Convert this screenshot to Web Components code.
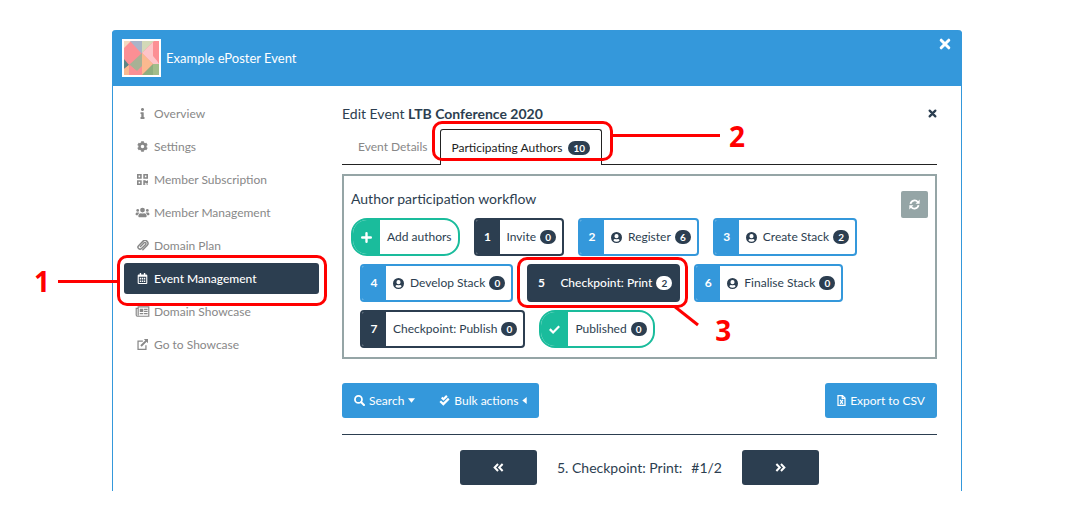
<!DOCTYPE html>
<html lang="en">
<head>
<meta charset="utf-8">
<title>Example ePoster Event</title>
<style>
  :root {
    --blue: #3498db;
    --dark: #2c3e50;
    --green: #1abc9c;
    --grey: #95a5a6;
    --muted: #888;
  }
  body {
    margin: 0;
    padding: 30px 114px 27px 112px;
    background: #fff;
    color: var(--dark);
    font: 12px/18px Lato, "Liberation Sans", sans-serif;
  }
</style>
</head>
<body>

<event-modal heading="Example ePoster Event">
  <side-nav slot="nav">
    <nav-item icon="info">Overview</nav-item>
    <nav-item icon="cog">Settings</nav-item>
    <nav-item icon="qrcode">Member Subscription</nav-item>
    <nav-item icon="users">Member Management</nav-item>
    <nav-item icon="clip">Domain Plan</nav-item>
    <nav-item icon="calendar" active>Event Management<call-out slot="note" side="left" label="1"></call-out></nav-item>
    <nav-item icon="news">Domain Showcase</nav-item>
    <nav-item icon="external">Go to Showcase</nav-item>
  </side-nav>

  <event-title name="LTB Conference 2020">Edit Event</event-title>

  <tab-bar>
    <tab-item>Event Details</tab-item>
    <tab-item active count="10">Participating Authors<call-out slot="note" side="right" label="2"></call-out></tab-item>
  </tab-bar>

  <work-flow heading="Author participation workflow">
    <flow-step class="first" kind="round" icon="plus">Add authors</flow-step>
    <flow-step kind="dark" number="1" count="0">Invite</flow-step>
    <flow-step number="2" count="6" user>Register</flow-step>
    <flow-step number="3" count="2" user>Create Stack</flow-step>
    <flow-step number="4" count="0" user>Develop Stack</flow-step>
    <flow-step kind="dark" number="5" count="2" active>Checkpoint: Print<call-out slot="note" side="below" label="3"></call-out></flow-step>
    <flow-step number="6" count="0" user>Finalise Stack</flow-step>
    <flow-step kind="dark" number="7" count="0">Checkpoint: Publish</flow-step>
    <flow-step kind="round" icon="check" count="0">Published</flow-step>
  </work-flow>

  <action-bar></action-bar>
  <step-pager position="#1/2">5. Checkpoint: Print:</step-pager>
</event-modal>

<script>
  // viewBox + content for every icon of the page
  const ICONS = {
    info: ['0 0 192 512', '<path d="M20 424h20V280H20c-11 0-20-9-20-20v-48c0-11 9-20 20-20h112c11 0 20 9 20 20v212h20c11 0 20 9 20 20v48c0 11-9 20-20 20H20c-11 0-20-9-20-20v-48c0-11 9-20 20-20zM96 0C56 0 24 32 24 72s32 72 72 72 72-32 72-72S136 0 96 0z"/>'],
    cog: ['0 0 512 512', '<path d="M487.400 315.700l-42.600-24.600c4.300-23.200 4.300-47 0-70.200l42.600-24.600c4.900-2.800 7.100-8.600 5.500-14-11.100-35.600-30-67.800-54.700-94.600-3.800-4.100-10-5.100-14.800-2.300L380.800 110c-17.900-15.400-38.500-27.300-60.800-35.100V25.800c0-5.600-3.900-10.500-9.400-11.700-36.700-8.200-74.300-7.800-109.200 0-5.500 1.200-9.400 6.100-9.400 11.700V75c-22.200 7.900-42.800 19.800-60.800 35.100L88.700 85.500c-4.900-2.800-11-1.900-14.800 2.300-24.700 26.700-43.600 58.900-54.700 94.600-1.700 5.400.6 11.200 5.500 14L67.300 221c-4.300 23.200-4.300 47 0 70.200l-42.600 24.600c-4.900 2.800-7.100 8.600-5.500 14 11.100 35.600 30 67.800 54.700 94.600 3.800 4.100 10 5.100 14.800 2.300l42.600-24.600c17.900 15.400 38.500 27.300 60.800 35.100v49.200c0 5.600 3.900 10.500 9.400 11.700 36.700 8.200 74.300 7.800 109.200 0 5.500-1.200 9.400-6.100 9.400-11.700v-49.200c22.200-7.900 42.800-19.800 60.800-35.100l42.600 24.600c4.900 2.800 11 1.900 14.800-2.300 24.700-26.700 43.600-58.900 54.700-94.600 1.500-5.500-.7-11.300-5.600-14.100zM256 336c-44.100 0-80-35.900-80-80s35.900-80 80-80 80 35.900 80 80-35.900 80-80 80z"/>'],
    qrcode: ['0 32 448 448', '<path d="M0 224h192V32H0v192zM64 96h64v64H64V96zm192-64v192h192V32H256zm128 128h-64V96h64v64zM0 480h192V288H0v192zm64-128h64v64H64v-64zm352-64h32v128h-96v-32h-32v96h-64V288h96v32h64v-32zm0 160h32v32h-32v-32zm-64 0h32v32h-32v-32z"/>'],
    users: ['0 0 640 512', '<circle cx="96" cy="160" r="64"/><circle cx="544" cy="160" r="64"/><circle cx="320" cy="144" r="112"/><path d="M576 256h-64c-18 0-34 7-45 19 40 22 69 62 75 109h66c18 0 32-14 32-32v-32c0-35-29-64-64-64zM397 288h-9c-21 10-44 16-68 16s-48-6-69-16h-8c-63 0-115 52-115 115v29c0 27 21 48 48 48h288c27 0 48-21 48-48v-29c0-63-52-115-115-115zM173 275c-12-12-27-19-45-19H64c-35 0-64 29-64 64v32c0 18 14 32 32 32h66c6-47 35-87 75-109z"/>'],
    clip: ['0 0 16 16', '<path d="M5 9.500l5.300-5.400a1.600 1.600 0 0 1 2.300 2.300l-6 6.100a3 3 0 0 1-4.300-4.300l6.200-6.200a4.300 4.300 0 0 1 6.100 6.100L8.500 14.200" fill="none" stroke="currentColor" stroke-width="2.100" stroke-linecap="round"/>'],
    calendar: ['0 0 14 16', '<path fill-rule="evenodd" d="M3 0h2v2h4V0h2v2h1.500A1.500 1.500 0 0 1 14 3.500V14.500A1.500 1.500 0 0 1 12.500 16h-11A1.500 1.500 0 0 1 0 14.500v-11A1.500 1.500 0 0 1 1.500 2H3zM1.600 5.500v8.900h10.800V5.500z"/><path d="M3 7h2v2.500H3zM6 7h2v2.500H6zM9 7h2v2.500H9zM3 10.800h2V13H3zM6 10.800h2V13H6zM9 10.800h2V13H9z"/>'],
    news: ['0 0 18 14', '<path d="M3.500 1h13.500v12H2.500A1.500 1.500 0 0 1 1 11.500V3h2.500zM3.500 3v9" fill="none" stroke="currentColor" stroke-width="1.500"/><path d="M5.500 3.500H10v4H5.500zM11 3.500h4.500V5H11zM11 6.200h4.500v1.500H11zM5.500 9h4.500v1.500H5.500zM11 9h4.500v1.500H11z"/>'],
    external: ['0 0 16 16', '<path d="M8.500 3H1.500v12h11.500V9" fill="none" stroke="currentColor" stroke-width="1.800"/><path d="M10 0h6v6l-2-2-7.200 7.200-2-2L12 2z"/>'],
    user: ['0 0 16 16', '<path fill-rule="evenodd" d="M8 0a8 8 0 1 1 0 16A8 8 0 0 1 8 0zM8 3a3 3 0 1 0 0 6 3 3 0 0 0 0-6zM3.400 12a5.800 5.800 0 0 0 9.200 0A3 3 0 0 0 10 10.200c-1.300.5-2.700.5-4 0A3 3 0 0 0 3.400 12z"/>'],
    plus: ['0 0 12 12', '<path d="M6 1.300v9.400M1.300 6h9.400" stroke="currentColor" stroke-width="2.600" stroke-linecap="round"/>'],
    check: ['0 0 14 12', '<path d="M2 6.500L5.200 9.700 12 2.800" fill="none" stroke="currentColor" stroke-width="2.800" stroke-linecap="square"/>'],
    times: ['0 0 12 12', '<path d="M2.200 2.200l7.600 7.600M9.800 2.200L2.200 9.800" stroke="currentColor" stroke-width="3" stroke-linecap="round"/>'],
    refresh: ['0 0 16 16', '<path d="M2.200 7A6 6 0 0 1 12.800 4.300M13.800 9A6 6 0 0 1 3.200 11.700" fill="none" stroke="currentColor" stroke-width="2.600"/><path d="M15.500.8v6H9.500zM.5 15.200v-6h6z"/>'],
    search: ['0 0 16 16', '<circle cx="6.500" cy="6.500" r="5.100" fill="none" stroke="currentColor" stroke-width="2.600"/><path d="M10.500 10.500l4 4" stroke="currentColor" stroke-width="3" stroke-linecap="round"/>'],
    checks: ['0 0 16 16', '<path d="M4 3.700L6.500 6.200 11.500 1.300M1.800 9L6.300 13.300 14.200 5.300" fill="none" stroke="currentColor" stroke-width="3.200"/>'],
    excel: ['0 0 12 16', '<path d="M.9.900h6.600l3.600 3.600v10.600H.9zM7 1v4h4" fill="none" stroke="currentColor" stroke-width="1.800"/><path d="M4 7l4 6M8 7l-4 6" stroke="currentColor" stroke-width="1.700"/>'],
    down: ['0 0 8 5', '<path d="M0 0h8L4 5z"/>'],
    left: ['0 0 5 8', '<path d="M5 0v8L0 4z"/>'],
    prev: ['0 0 12 10', '<path d="M5.500 1.200L1.800 5l3.700 3.800M10.500 1.200L6.800 5l3.700 3.800" fill="none" stroke="currentColor" stroke-width="2.200"/>'],
    next: ['0 0 12 10', '<path d="M1.500 1.200L5.200 5 1.500 8.800M6.500 1.200L10.200 5 6.500 8.800" fill="none" stroke="currentColor" stroke-width="2.200"/>']
  };

  class UiIcon extends HTMLElement {
    connectedCallback() {
      const [box, content] = ICONS[this.getAttribute('name')];
      this.attachShadow({ mode: 'open' }).innerHTML = `
        <style>
          :host { display: inline-flex; flex: none; width: 11px; height: 11px; }
          svg { width: 100%; height: 100%; fill: currentColor; }
        </style>
        <svg viewBox="${box}" aria-hidden="true">${content}</svg>
      `;
    }
  }

  class CountBadge extends HTMLElement {
    connectedCallback() {
      this.attachShadow({ mode: 'open' }).innerHTML = `
        <style>
          :host {
            display: inline-block; box-sizing: border-box; min-width: 16px; padding: 0 5px;
            border-radius: 8px; background: var(--badge-bg, var(--dark)); color: var(--badge-fg, #fff);
            font-size: 10px; font-weight: 700; line-height: 14px; text-align: center;
          }
        </style>
        <slot></slot>
      `;
    }
  }

  // Red frame with a numbered leader line, laid over its parent
  const LEADERS = {
    left: '<svg width="62" height="3"><path d="M0 1.500h62"/></svg>',
    right: '<svg width="110" height="3"><path d="M0 1.500h110"/></svg>',
    below: '<svg width="27" height="22"><path d="M1 1l24 19"/></svg>'
  };

  class CallOut extends HTMLElement {
    connectedCallback() {
      this.attachShadow({ mode: 'open' }).innerHTML = `
        <style>
          :host {
            position: absolute; z-index: 2; inset: -8px -8px -12px -7px;
            border: 3px solid #f00; border-radius: 10px; pointer-events: none;
          }
          :host([side="right"]) { inset: -8px -11px 4px -8px; }
          :host([side="below"]) { inset: -7px -8px -6px -10px; }
          svg { position: absolute; stroke: #f00; stroke-width: 3; fill: none; }
          b {
            position: absolute; color: #f00;
            font: 700 28px/28px "Open Sans", sans-serif;
          }
          :host([side="left"]) svg { right: 100%; top: 22px; }
          :host([side="left"]) b { right: calc(100% + 70px); top: 9px; }
          :host([side="right"]) svg { left: 100%; top: 10px; }
          :host([side="right"]) b { left: calc(100% + 119px); top: -2px; }
          :host([side="below"]) svg { right: -15px; top: 100%; }
          :host([side="below"]) b { right: -46px; top: calc(100% + 11px); }
        </style>
        ${LEADERS[this.getAttribute('side')]}
        <b>${this.getAttribute('label')}</b>
      `;
    }
  }

  class EventModal extends HTMLElement {
    connectedCallback() {
      this.attachShadow({ mode: 'open' }).innerHTML = `
        <style>
          :host {
            display: block; border: solid var(--blue); border-width: 0 1px;
            border-radius: 4px 4px 0 0;
          }
          header {
            display: flex; align-items: center; gap: 5px; height: 56px; margin: 0 -1px;
            padding: 0 11px 0 10px; box-sizing: border-box;
            border-radius: 4px 4px 0 0; background: var(--blue); color: #fff;
          }
          .logo { border: 2px solid #fff; box-sizing: border-box; width: 39px; height: 38px; }
          h1 { flex: 1; margin: 0; font-size: 13px; line-height: 20px; font-weight: 400; }
          button {
            display: flex; align-self: flex-start; margin: 0; padding: 8px 0;
            border: 0; background: none; color: inherit;
          }
          button ui-icon { width: 12px; height: 12px; }
          .body { display: grid; grid-template-columns: 195px minmax(0, 1fr); gap: 23px; padding: 12px 24px 6px 11px; }
        </style>
        <header>
          <svg class="logo" viewBox="0 0 35 34" preserveAspectRatio="none" aria-hidden="true">
            <path fill="#fc8f94" d="M0 0h35v34H0z"/>
            <path fill="#f3d9c0" d="M0 0h7L0 7z"/>
            <path fill="#a9b4c8" d="M6 0h12v13z"/>
            <path fill="#d3d9b8" d="M18 0h12L18 12z"/>
            <path fill="#fdc4c8" d="M18 12L29 1v11l6 11h-6z"/>
            <path fill="#fc8f94" d="M29 1h6v21l-6-7z"/>
            <path fill="#a8b195" d="M18 12v13l-5 5-8-6z"/>
            <path fill="#fbb98f" d="M18 12l11 11-11 11z"/>
            <path fill="#5e8686" d="M0 18l5 6-5 4z"/>
            <path fill="#fbb98f" d="M0 28l5-4v10H0z"/>
            <path fill="#fc8f94" d="M6 24l11 10H6z"/>
            <path fill="#8fae7f" d="M18 34l11-11v11z"/>
            <path fill="#a3bd8a" d="M29 23h6v11h-6z"/>
          </svg>
          <h1>${this.getAttribute('heading')}</h1>
          <button type="button" aria-label="Close"><ui-icon name="times"></ui-icon></button>
        </header>
        <div class="body">
          <slot name="nav"></slot>
          <main><slot></slot></main>
        </div>
      `;
    }
  }

  class SideNav extends HTMLElement {
    connectedCallback() {
      this.attachShadow({ mode: 'open' }).innerHTML = `
        <style>
          :host { display: block; }
          nav { display: flex; flex-direction: column; gap: 2px; }
        </style>
        <nav><slot></slot></nav>
      `;
    }
  }

  class NavItem extends HTMLElement {
    connectedCallback() {
      this.attachShadow({ mode: 'open' }).innerHTML = `
        <style>
          :host { display: block; position: relative; color: var(--muted); }
          :host([active]) { color: #fff; font-weight: 500; }
          a {
            display: flex; align-items: center; gap: 4px; height: 31px; padding-left: 11px;
            border-radius: 3px; color: inherit; text-decoration: none;
          }
          :host([active]) a { background: var(--dark); }
          ui-icon { width: 15px; }
        </style>
        <a href="#"><ui-icon name="${this.getAttribute('icon')}"></ui-icon><span><slot></slot></span></a>
        <slot name="note"></slot>
      `;
    }
  }

  class EventTitle extends HTMLElement {
    connectedCallback() {
      this.attachShadow({ mode: 'open' }).innerHTML = `
        <style>
          :host { display: flex; align-items: center; justify-content: space-between; height: 31px; }
          h2 { margin: 0; font-size: 14px; line-height: 20px; font-weight: 400; }
          button { display: flex; margin: 0; padding: 0; border: 0; background: none; color: var(--dark); }
          ui-icon { width: 9px; height: 9px; }
        </style>
        <h2><slot></slot> <b>${this.getAttribute('name')}</b></h2>
        <button type="button" aria-label="Close event"><ui-icon name="times"></ui-icon></button>
      `;
    }
  }

  class TabBar extends HTMLElement {
    connectedCallback() {
      this.attachShadow({ mode: 'open' }).innerHTML = `
        <style>
          :host { display: flex; border-bottom: 1px solid #222; }
        </style>
        <slot></slot>
      `;
    }
  }

  class TabItem extends HTMLElement {
    connectedCallback() {
      const count = this.getAttribute('count');
      this.attachShadow({ mode: 'open' }).innerHTML = `
        <style>
          :host { display: block; position: relative; color: var(--muted); }
          button {
            display: flex; align-items: center; gap: 6px; height: 35px; margin: 0; padding: 0 12px 0 16px;
            border: 0; background: none; color: inherit; font: inherit;
          }
          :host([active]) { margin-bottom: -1px; color: #222; }
          :host([active]) button {
            height: 36px; padding: 0 11px; background: #fff;
            border: 1px solid #222; border-bottom: 0; border-radius: 3px 3px 0 0;
          }
        </style>
        <button type="button"><span><slot></slot></span>${count ? `<count-badge>${count}</count-badge>` : ''}</button>
        <slot name="note"></slot>
      `;
    }
  }

  class WorkFlow extends HTMLElement {
    connectedCallback() {
      this.attachShadow({ mode: 'open' }).innerHTML = `
        <style>
          :host { display: block; margin-top: 9px; padding: 14px 7px 9px; border: 2px solid var(--grey); }
          .top { display: flex; justify-content: space-between; align-items: center; height: 28px; }
          h3 { margin: 0; padding-bottom: 10px; font-size: 14px; line-height: 20px; font-weight: 400; }
          button {
            display: flex; align-items: center; justify-content: center; width: 27px; height: 27px;
            margin: 0; padding: 0; border: 0; border-radius: 2px; background: var(--grey); color: #fff;
          }
          .steps { display: flex; flex-wrap: wrap; gap: 8px 5px; }
          ::slotted(flow-step:not(.first)) { margin-left: 9px; }
        </style>
        <div class="top">
          <h3>${this.getAttribute('heading')}</h3>
          <button type="button" aria-label="Refresh"><ui-icon name="refresh"></ui-icon></button>
        </div>
        <div class="steps"><slot></slot></div>
      `;
    }
  }

  class FlowStep extends HTMLElement {
    connectedCallback() {
      const icon = this.getAttribute('icon');
      const count = this.getAttribute('count');
      const mark = icon ? `<ui-icon name="${icon}"></ui-icon>` : this.getAttribute('number');
      this.attachShadow({ mode: 'open' }).innerHTML = `
        <style>
          :host { display: block; position: relative; --tone: var(--blue); }
          :host([kind="dark"]) { --tone: var(--dark); }
          :host([kind="round"]) { --tone: var(--green); }
          button {
            display: flex; height: 38px; margin: 0; padding: 0; overflow: hidden;
            border: 2px solid var(--tone); border-radius: 4px;
            background: #fff; color: var(--dark); font: inherit;
          }
          :host([kind="round"]) button { border-radius: 16px; }
          .mark {
            display: flex; align-items: center; justify-content: center; width: 24px;
            background: var(--tone); color: #fff; font-weight: 700;
          }
          :host([kind="round"]) .mark { width: 27px; }
          .text { display: flex; align-items: center; gap: 4px; padding: 0 6px 0 7px; }
          .user { margin-right: 2px; }
          :host([active]) button { background: var(--tone); color: #fff; font-weight: 500; }
          :host([active]) { --badge-bg: #fff; --badge-fg: var(--dark); }
        </style>
        <button type="button">
          <span class="mark">${mark}</span>
          <span class="text">
            ${this.hasAttribute('user') ? '<ui-icon class="user" name="user"></ui-icon>' : ''}
            <span><slot></slot></span>
            ${count ? `<count-badge>${count}</count-badge>` : ''}
          </span>
        </button>
        <slot name="note"></slot>
      `;
    }
  }

  class ActionBar extends HTMLElement {
    connectedCallback() {
      this.attachShadow({ mode: 'open' }).innerHTML = `
        <style>
          :host {
            display: flex; justify-content: space-between; margin-top: 24px; padding-bottom: 16px;
            border-bottom: 1px solid var(--dark);
          }
          .group { display: flex; }
          button {
            display: flex; align-items: center; gap: 4px; height: 35px; margin: 0; padding: 0 12px;
            border: 0; border-radius: 3px; background: var(--blue); color: #fff; font: inherit;
          }
          .group button:first-child { border-radius: 3px 0 0 3px; }
          .group button:last-child { border-radius: 0 3px 3px 0; }
          .caret { width: 7px; height: 5px; }
          .caret.side { width: 5px; height: 7px; }
          .file { width: 9px; }
        </style>
        <div class="group">
          <button type="button"><ui-icon name="search"></ui-icon>Search<ui-icon class="caret" name="down"></ui-icon></button>
          <button type="button"><ui-icon name="checks"></ui-icon>Bulk actions<ui-icon class="caret side" name="left"></ui-icon></button>
        </div>
        <button type="button"><ui-icon class="file" name="excel"></ui-icon>Export to CSV</button>
      `;
    }
  }

  class StepPager extends HTMLElement {
    connectedCallback() {
      this.attachShadow({ mode: 'open' }).innerHTML = `
        <style>
          :host {
            display: flex; align-items: center; justify-content: center; gap: 20px;
            margin-top: 15px; font-size: 14px;
          }
          button {
            display: flex; align-items: center; justify-content: center; width: 77px; height: 35px;
            margin: 0; padding: 0; border: 0; border-radius: 3px; background: var(--dark); color: #fff;
          }
          .label { display: flex; gap: 9px; }
        </style>
        <button type="button" aria-label="Previous"><ui-icon name="prev"></ui-icon></button>
        <span class="label"><span><slot></slot></span><span>${this.getAttribute('position')}</span></span>
        <button type="button" aria-label="Next"><ui-icon name="next"></ui-icon></button>
      `;
    }
  }

  customElements.define('ui-icon', UiIcon);
  customElements.define('count-badge', CountBadge);
  customElements.define('call-out', CallOut);
  customElements.define('event-modal', EventModal);
  customElements.define('side-nav', SideNav);
  customElements.define('nav-item', NavItem);
  customElements.define('event-title', EventTitle);
  customElements.define('tab-bar', TabBar);
  customElements.define('tab-item', TabItem);
  customElements.define('work-flow', WorkFlow);
  customElements.define('flow-step', FlowStep);
  customElements.define('action-bar', ActionBar);
  customElements.define('step-pager', StepPager);
</script>
</body>
</html>
